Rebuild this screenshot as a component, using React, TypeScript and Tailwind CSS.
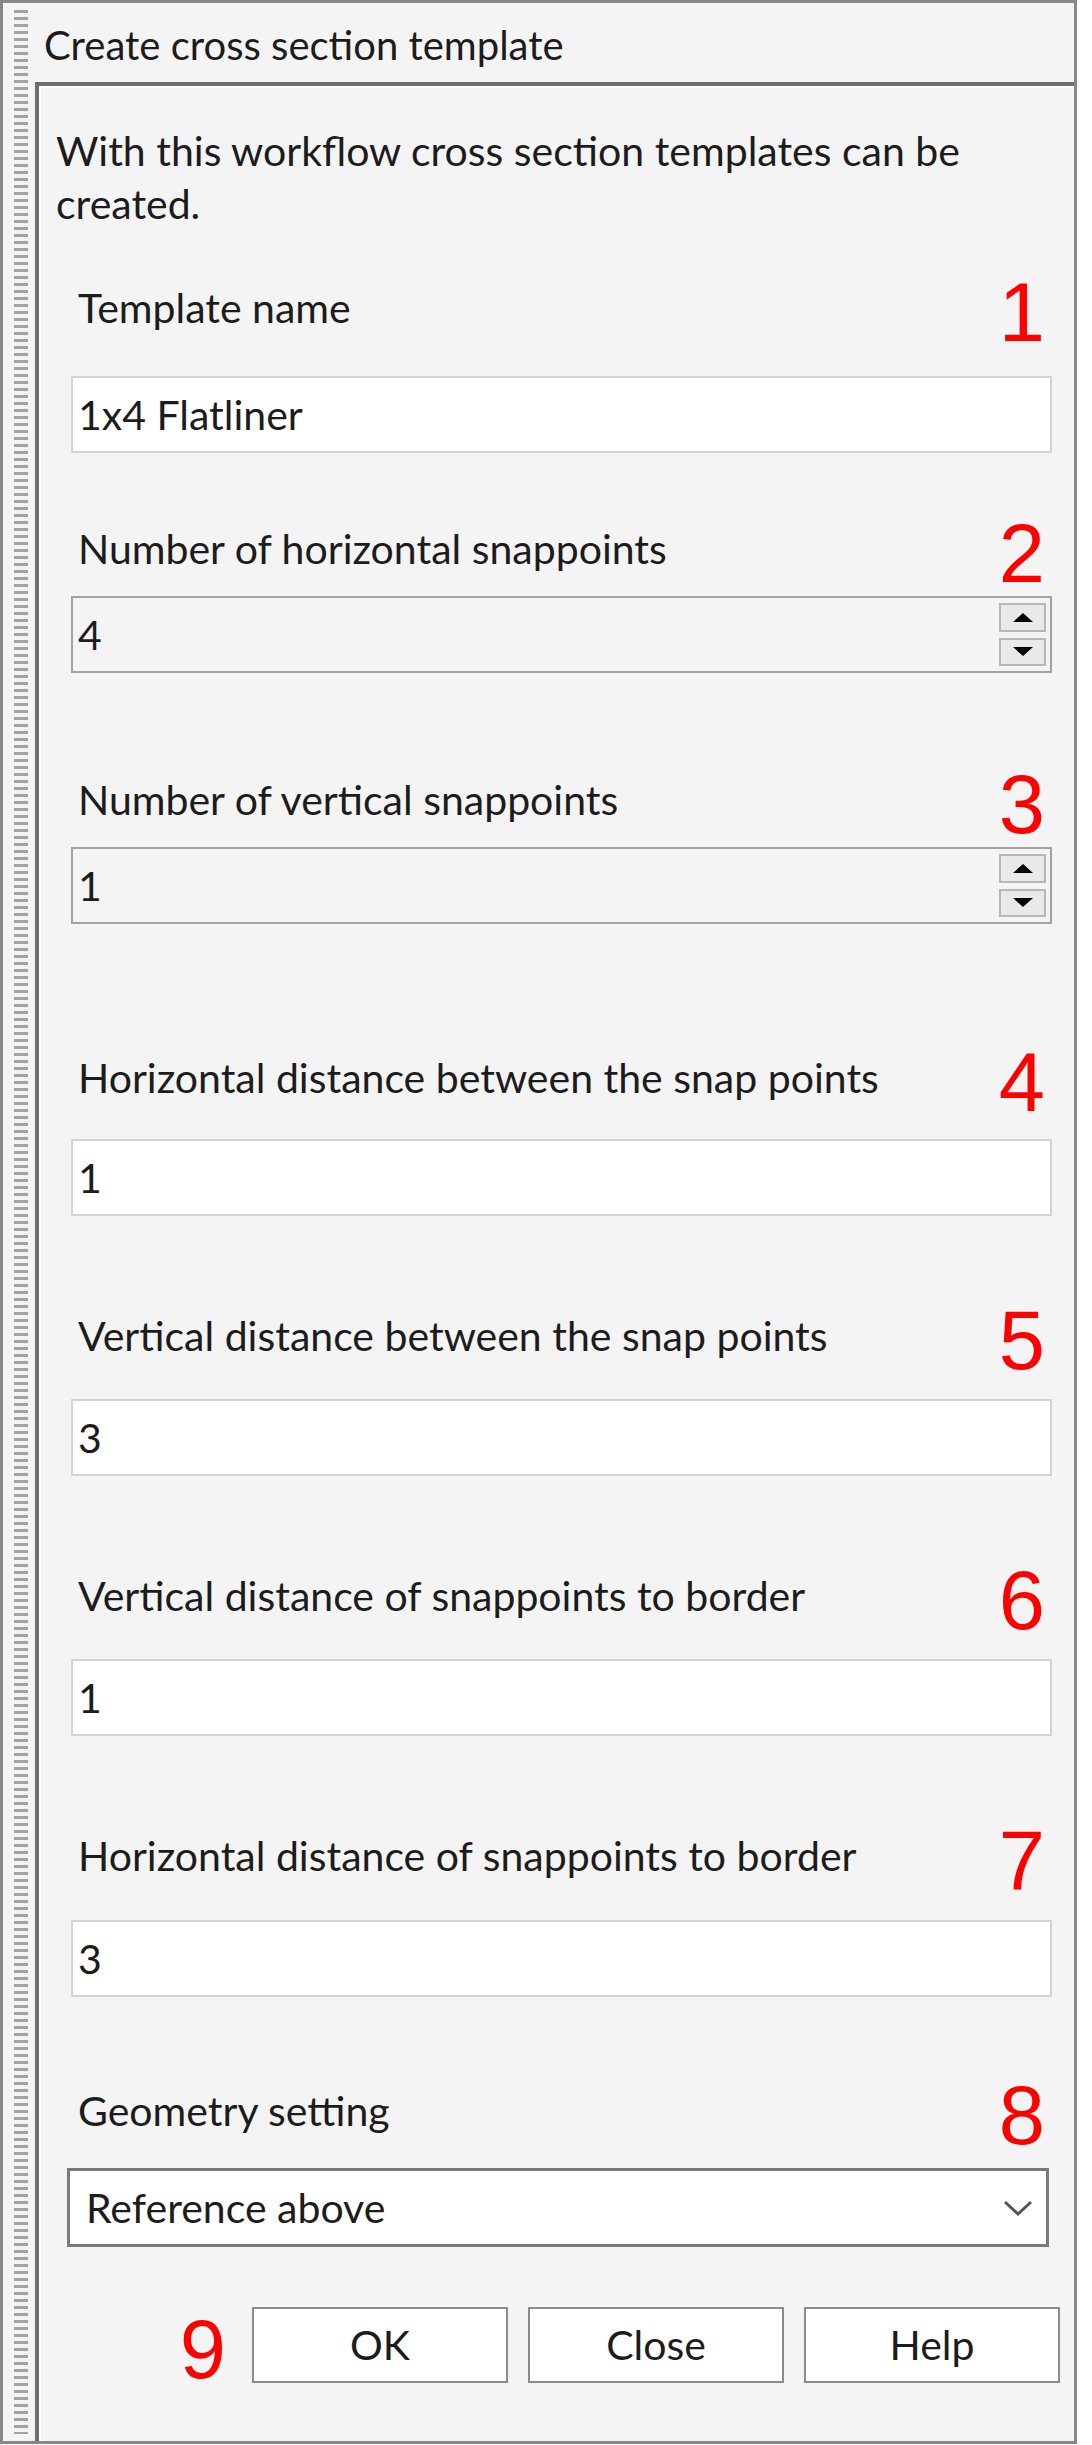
import React from 'react';

function Num({ n }: { n: string }) {
  return (
    <span className="translate-y-[5px] font-['Liberation_Sans',Arial,sans-serif] text-[83px] leading-none text-[#ff0000]">{n}</span>
  );
}

function LabelRow({ label, n, className = '' }: { label: string; n: string; className?: string }) {
  return (
    <div className={`flex h-[60px] items-center justify-between pl-[7px] pr-[7px] ${className}`}>
      <span>{label}</span>
      <Num n={n} />
    </div>
  );
}

function TextBox({ value, className = '' }: { value: string; className?: string }) {
  return (
    <div className={`flex h-[77px] items-center border-2 border-[#d3d3d3] bg-white pl-[5px] ${className}`}>
      {value}
    </div>
  );
}

function Spinner({ value, className = '' }: { value: string; className?: string }) {
  return (
    <div className={`flex h-[77px] items-stretch border-2 border-[#a3a3a3] bg-[#f4f4f4] ${className}`}>
      <div className="flex flex-1 items-center pl-[5px]">{value}</div>
      <div className="flex w-[51px] flex-col gap-[6px] py-[5px] pr-[4px]">
        <div className="flex flex-1 items-center justify-center border-2 border-[#b7b7b7] bg-[#e9e9e9]">
          <svg width="20" height="9" viewBox="0 0 20 9"><path d="M10 0 L20 9 L0 9 Z" fill="#000" /></svg>
        </div>
        <div className="flex flex-1 items-center justify-center border-2 border-[#b7b7b7] bg-[#e9e9e9]">
          <svg width="20" height="9" viewBox="0 0 20 9"><path d="M0 0 L20 0 L10 9 Z" fill="#000" /></svg>
        </div>
      </div>
    </div>
  );
}

export default function App() {
  return (
    <div className="h-[2445px] w-[1092px] bg-white font-[Lato,'Open_Sans',sans-serif] text-[41px] leading-none text-[#1c1c1c]">
      <div className="flex h-[2444px] w-[1077px] border-[3px] border-[#878787] bg-[#f4f4f4]">
        {/* grip */}
        <div className="w-[32px] shrink-0 py-[7px] pl-[11px]">
          <div className="h-full w-[14px] bg-[repeating-linear-gradient(to_bottom,#a2a2a2_0px,#a2a2a2_3px,transparent_3px,transparent_7px)]" />
        </div>

        <div className="flex flex-1 flex-col">
          <div className="flex h-[79px] shrink-0 items-center pl-[9px] pt-[5px] text-[40px]">Create cross section template</div>

          <div className="flex flex-1 flex-col border-l-4 border-t-4 border-[#6f6f6f] shadow-[inset_2px_2px_0_#ffffff]">
            <div className="mt-[38px] pl-[17px] leading-[53px]">
              With this workflow cross section templates can be
              <br />
              created.
            </div>

            <div className="ml-[32px] mr-[22px]">
              <LabelRow label="Template name" n="1" className="mt-[47px]" />
              <TextBox value="1x4 Flatliner" className="mt-[39px]" />

              <LabelRow label="Number of horizontal snappoints" n="2" className="mt-[65px]" />
              <Spinner value="4" className="mt-[18px]" />

              <LabelRow label="Number of vertical snappoints" n="3" className="mt-[96px]" />
              <Spinner value="1" className="mt-[18px]" />

              <LabelRow label="Horizontal distance between the snap points" n="4" className="mt-[123px]" />
              <TextBox value="1" className="mt-[32px] h-[75px]" />

              <LabelRow label="Vertical distance between the snap points" n="5" className="mt-[89px]" />
              <TextBox value="3" className="mt-[34px] h-[76px]" />

              <LabelRow label="Vertical distance of snappoints to border" n="6" className="mt-[89px]" />
              <TextBox value="1" className="mt-[34px] h-[76px]" />

              <LabelRow label="Horizontal distance of snappoints to border" n="7" className="mt-[89px]" />
              <TextBox value="3" className="mt-[35px] h-[76px]" />

              <LabelRow label="Geometry setting" n="8" className="mt-[83px] pl-[4px]" />
            </div>

            <div className="ml-[28px] mr-[25px] mt-[28px] flex h-[79px] items-center justify-between border-[3px] border-[#7b7b7b] bg-white pl-[16px] pr-[13px]">
              <span>Reference above</span>
              <svg width="30" height="18" viewBox="0 0 30 18">
                <polyline points="2,3 15,15 28,3" fill="none" stroke="#555555" strokeWidth="3" />
              </svg>
            </div>

            <div className="mr-[14px] mt-[56px] flex items-center justify-end">
              <Num n="9" />
              <div className="ml-[26px] flex gap-[20px]">
                {['OK', 'Close', 'Help'].map((b) => (
                  <div key={b} className="flex h-[76px] w-[256px] items-center justify-center border-2 border-[#8c8c8c] bg-white">
                    {b}
                  </div>
                ))}
              </div>
            </div>
          </div>
        </div>
      </div>
    </div>
  );
}
